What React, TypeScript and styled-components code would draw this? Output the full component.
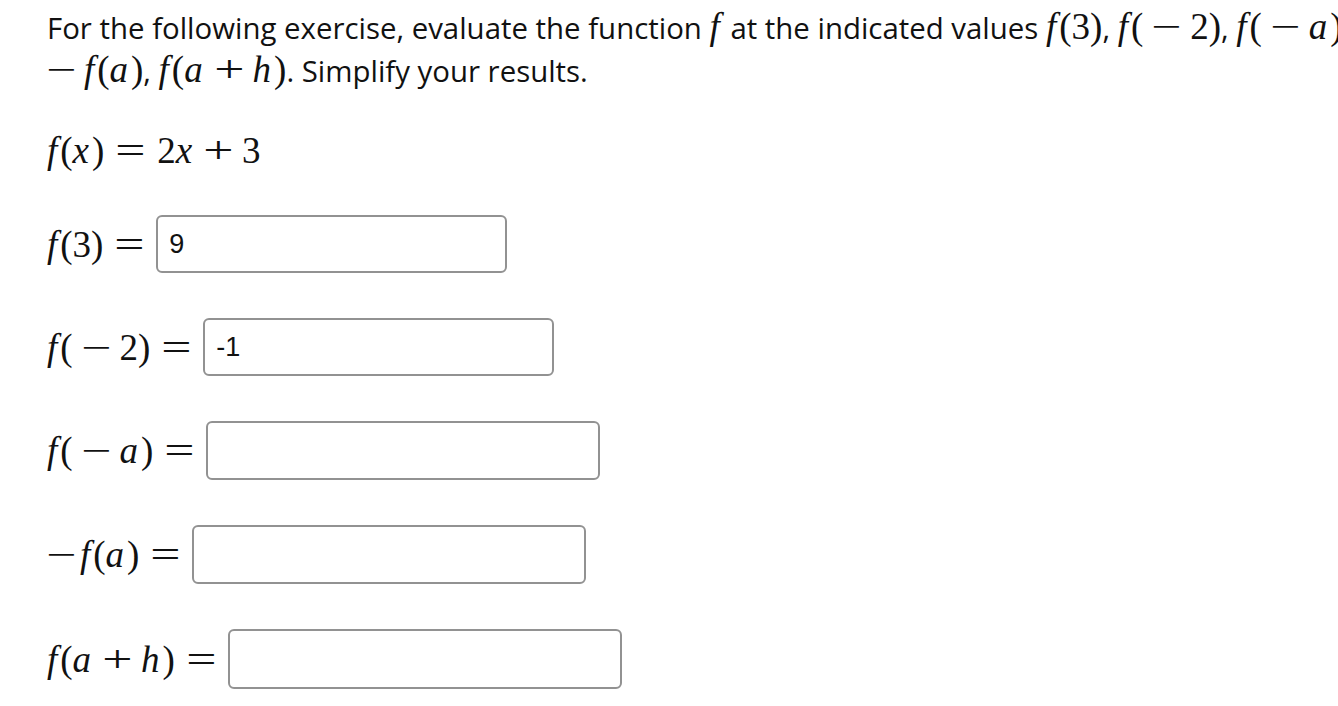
import React from 'react';
import styled, { createGlobalStyle } from 'styled-components';

const GlobalStyle = createGlobalStyle`
  html, body {
    margin: 0;
    padding: 0;
    background: #fff;
    overflow: hidden;
  }
  body {
    font-family: "Open Sans", "Liberation Sans", sans-serif;
    color: #111;
  }
`;

const Page = styled.div`
  width: 1338px;
  height: 706px;
  overflow: hidden;
  padding: 6px 0 0 47px;
  box-sizing: border-box;
`;

const Prompt = styled.p`
  margin: 0;
  width: 1385px;
  font-size: 29.4px;
  line-height: 42px;
`;

const Math = styled.span`
  font-family: "Liberation Serif", "DejaVu Serif", serif;
  font-size: 37px;
  white-space: nowrap;
`;

const Var = styled.i`
  font-style: italic;
  padding-right: 3px;
`;

// binary operator (−, +): widened to look like the TeX glyphs
const Op = styled.span<{ $l?: number; $r?: number }>`
  display: inline-block;
  transform: scaleX(1.45);
  margin: 0 ${(p) => p.$r ?? 13}px 0 ${(p) => p.$l ?? 13}px;
`;

const Rows = styled.div`
  display: flex;
  flex-direction: column;
  gap: 45px;
  margin-top: 38px;
`;

const Row = styled.div<{ $h?: number }>`
  display: flex;
  align-items: center;
  height: ${(p) => p.$h ?? 58}px;
`;

const Label = styled(Math)`
  display: inline-flex;
  align-items: center;
`;

const Equals = styled(Op)`
  margin: 0 16px;
`;

const Answer = styled.input<{ $w: number; $h: number }>`
  box-sizing: border-box;
  width: ${(p) => p.$w}px;
  height: ${(p) => p.$h}px;
  border: 2px solid #929292;
  border-radius: 6px;
  padding: 0 11px;
  font-family: "Liberation Sans", Arial, sans-serif;
  font-size: 27px;
  color: #111;
  background: #fff;
  outline: none;
`;

const F = () => <Var>f</Var>;

const rows: { label: React.ReactNode; value: string; w: number; h: number }[] = [
  { label: <><F />(3)</>, value: '9', w: 351, h: 58 },
  { label: <><F />(<Op>−</Op>2)</>, value: '-1', w: 351, h: 58 },
  { label: <><F />(<Op>−</Op><Var>a</Var>)</>, value: '', w: 394, h: 59 },
  { label: <><Op $l={4} $r={8}>−</Op><F />(<Var>a</Var>)</>, value: '', w: 394, h: 59 },
  { label: <><F />(<Var>a</Var><Op>+</Op><Var>h</Var>)</>, value: '', w: 394, h: 60 },
];

export default function App() {
  return (
    <>
      <GlobalStyle />
      <Page>
        <Prompt>
          For the following exercise, evaluate the function <Math><F /></Math> at the indicated values{' '}
          <Math><F />(3)</Math>, <Math><F />(<Op>−</Op>2)</Math>, <Math><F />(<Op>−</Op><Var>a</Var>)</Math>,{' '}
          <Math><Op $l={4} $r={12}>−</Op><F />(<Var>a</Var>)</Math>, <Math><F />(<Var>a</Var><Op>+</Op><Var>h</Var>)</Math>. Simplify your results.
        </Prompt>
        <Rows>
          <Row $h={40}>
            <Label>
              <F />(<Var>x</Var>)<Equals>=</Equals>2<Var>x</Var><Op>+</Op>3
            </Label>
          </Row>
          {rows.map((r, i) => (
            <Row key={i} $h={r.h}>
              <Label>
                {r.label}
                <Equals>=</Equals>
              </Label>
              <Answer $w={r.w} $h={r.h} defaultValue={r.value} />
            </Row>
          ))}
        </Rows>
      </Page>
    </>
  );
}
